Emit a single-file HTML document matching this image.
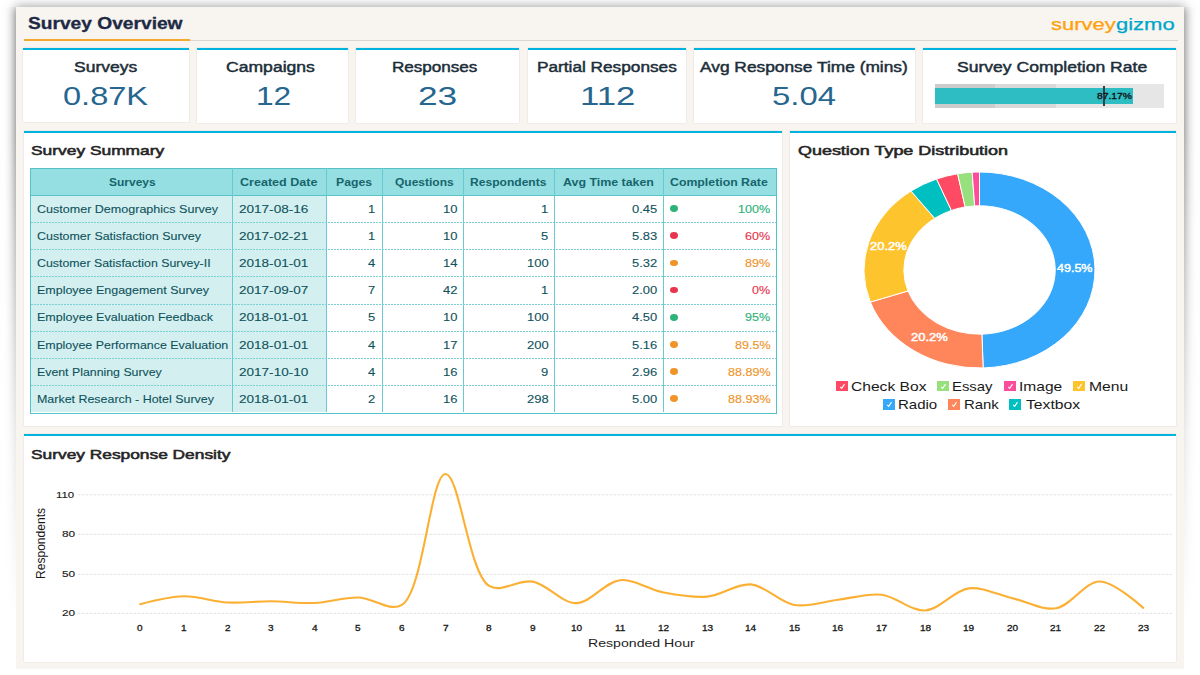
<!DOCTYPE html>
<html><head><meta charset="utf-8">
<style>
html,body{margin:0;padding:0;width:1200px;height:675px;overflow:hidden;background:#fff;}
body{position:relative;font-family:"Liberation Sans", sans-serif;}
.a{position:absolute;}
.t{position:absolute;white-space:nowrap;line-height:1;transform-origin:0 0;font-family:"Liberation Sans", sans-serif;}
#frame{left:16px;top:7px;width:1168px;height:662px;background:#f8f4f0;}
.card{position:absolute;background:#fff;border-top:2px solid #00b3de;box-shadow:0 0 1px rgba(120,100,90,.35);}
.sq{position:absolute;width:11px;height:11px;}
.sq svg{position:absolute;left:0;top:0;}
</style></head>
<body>
<!-- shadows -->
<div class="a" style="left:16px;top:7px;width:1168px;height:662px;box-shadow:0 0 10px 1px rgba(0,0,0,.55);"></div>
<div class="a" style="left:0;top:0;width:16px;height:675px;background:linear-gradient(to bottom,rgba(255,255,255,0) 0%,rgba(255,255,255,0) 20%,rgba(255,255,255,.75) 65%,#fff 92%);"></div>
<div class="a" style="left:1184px;top:0;width:16px;height:675px;background:linear-gradient(to bottom,rgba(255,255,255,0) 0%,rgba(255,255,255,0) 20%,rgba(255,255,255,.75) 65%,#fff 92%);"></div>
<div class="a" style="left:0;top:0;width:1200px;height:7px;background:rgba(255,255,255,.35);"></div>
<div class="a" style="left:0;top:669px;width:1200px;height:6px;background:#fff;"></div>
<div id="frame" class="a"></div>
<!-- header lines -->
<div class="a" style="left:24px;top:39px;width:166px;height:2px;background:#f3a92f;"></div>
<div class="a" style="left:190px;top:40px;width:988px;height:1px;background:#d9d6d3;"></div>
<!-- logo -->


<!-- KPI cards -->
<div class="card" style="left:23px;top:48px;width:166px;height:72px;"></div>
<div class="card" style="left:197px;top:48px;width:151px;height:73px;"></div>
<div class="card" style="left:356px;top:48px;width:162.5px;height:73px;"></div>
<div class="card" style="left:528px;top:48px;width:158px;height:73px;"></div>
<div class="card" style="left:693.5px;top:48px;width:221px;height:73px;"></div>
<div class="card" style="left:923px;top:48px;width:253px;height:73px;"></div>

<!-- bullet -->
<div class="a" style="left:935px;top:84px;width:229px;height:24px;background:#e6e6e6;"></div>
<div class="a" style="left:935px;top:84px;width:120.5px;height:24px;background:#d9d9d9;"></div>
<div class="a" style="left:935px;top:84px;width:60px;height:24px;background:#cccccc;"></div>
<div class="a" style="left:935px;top:88px;width:198px;height:16px;background:#2dbdc3;"></div>
<div class="a" style="left:1103px;top:86px;width:2px;height:20px;background:#34414b;"></div>

<!-- panels -->
<div class="card" style="left:24px;top:131px;width:758px;height:293px;"></div>
<div class="card" style="left:789.5px;top:131px;width:386.5px;height:293px;"></div>
<div class="card" style="left:24px;top:433.5px;width:1152px;height:226px;"></div>

<!-- table -->
<div class="a" style="left:30px;top:167.5px;width:744.7px;height:244px;border:1px solid #55c2c8;background:#fff;"></div>
<div class="a" style="left:31px;top:168.5px;width:744.7px;height:27px;background:#95dee1;"></div>
<div class="a" style="left:31px;top:195.5px;width:295px;height:216px;background:#d3efef;"></div>
<div class="a" style="left:31px;top:195px;width:744.7px;height:1px;background:#55c3c8;"></div>
<div class="a" style="left:232px;top:168px;width:1px;height:244px;background:#68cacf;"></div>
<div class="a" style="left:325.5px;top:168px;width:1px;height:244px;background:#68cacf;"></div>
<div class="a" style="left:382px;top:168px;width:1px;height:244px;background:#68cacf;"></div>
<div class="a" style="left:462.8px;top:168px;width:1px;height:244px;background:#68cacf;"></div>
<div class="a" style="left:553.7px;top:168px;width:1px;height:244px;background:#68cacf;"></div>
<div class="a" style="left:663px;top:168px;width:1px;height:244px;background:#68cacf;"></div>
<div class='a' style='left:31px;top:222.15px;width:744.7px;height:1px;background:repeating-linear-gradient(to right,#7ad1d5 0 2px,rgba(255,255,255,0) 2px 3px);'></div>
<div class='a' style='left:31px;top:249.30px;width:744.7px;height:1px;background:repeating-linear-gradient(to right,#7ad1d5 0 2px,rgba(255,255,255,0) 2px 3px);'></div>
<div class='a' style='left:31px;top:276.45px;width:744.7px;height:1px;background:repeating-linear-gradient(to right,#7ad1d5 0 2px,rgba(255,255,255,0) 2px 3px);'></div>
<div class='a' style='left:31px;top:303.60px;width:744.7px;height:1px;background:repeating-linear-gradient(to right,#7ad1d5 0 2px,rgba(255,255,255,0) 2px 3px);'></div>
<div class='a' style='left:31px;top:330.75px;width:744.7px;height:1px;background:repeating-linear-gradient(to right,#7ad1d5 0 2px,rgba(255,255,255,0) 2px 3px);'></div>
<div class='a' style='left:31px;top:357.90px;width:744.7px;height:1px;background:repeating-linear-gradient(to right,#7ad1d5 0 2px,rgba(255,255,255,0) 2px 3px);'></div>
<div class='a' style='left:31px;top:385.05px;width:744.7px;height:1px;background:repeating-linear-gradient(to right,#7ad1d5 0 2px,rgba(255,255,255,0) 2px 3px);'></div>
<div class='a' style='left:669.8px;top:205.20px;width:8px;height:6.8px;border-radius:50%;background:#2db377;'></div>
<div class='a' style='left:669.8px;top:232.35px;width:8px;height:6.8px;border-radius:50%;background:#e8354f;'></div>
<div class='a' style='left:669.8px;top:259.50px;width:8px;height:6.8px;border-radius:50%;background:#ef9429;'></div>
<div class='a' style='left:669.8px;top:286.65px;width:8px;height:6.8px;border-radius:50%;background:#e8354f;'></div>
<div class='a' style='left:669.8px;top:313.80px;width:8px;height:6.8px;border-radius:50%;background:#2db377;'></div>
<div class='a' style='left:669.8px;top:340.95px;width:8px;height:6.8px;border-radius:50%;background:#ef9429;'></div>
<div class='a' style='left:669.8px;top:368.10px;width:8px;height:6.8px;border-radius:50%;background:#ef9429;'></div>
<div class='a' style='left:669.8px;top:395.25px;width:8px;height:6.8px;border-radius:50%;background:#ef9429;'></div>

<!-- donut -->
<svg class="a" style="left:0;top:0" width="1200" height="675">
<path d='M979.50,172.00 A115.50,98.00 0 0 1 983.16,367.95 L981.90,334.16 A75.65,64.19 0 0 0 979.50,205.81 Z' fill='#36a8fc' stroke='#fff' stroke-width='1'/>
<path d='M983.16,367.95 A115.50,98.00 0 0 1 870.35,302.05 L908.01,290.99 A75.65,64.19 0 0 0 981.90,334.16 Z' fill='#ff865a' stroke='#fff' stroke-width='1'/>
<path d='M870.35,302.05 A115.50,98.00 0 0 1 911.02,191.08 L934.65,218.31 A75.65,64.19 0 0 0 908.01,290.99 Z' fill='#fec42e' stroke='#fff' stroke-width='1'/>
<path d='M911.02,191.08 A115.50,98.00 0 0 1 936.57,179.02 L951.38,210.41 A75.65,64.19 0 0 0 934.65,218.31 Z' fill='#00bfc1' stroke='#fff' stroke-width='1'/>
<path d='M936.57,179.02 A115.50,98.00 0 0 1 957.64,173.77 L965.18,206.97 A75.65,64.19 0 0 0 951.38,210.41 Z' fill='#ff4a63' stroke='#fff' stroke-width='1'/>
<path d='M957.64,173.77 A115.50,98.00 0 0 1 972.17,172.20 L974.70,205.94 A75.65,64.19 0 0 0 965.18,206.97 Z' fill='#97e07d' stroke='#fff' stroke-width='1'/>
<path d='M972.17,172.20 A115.50,98.00 0 0 1 979.50,172.00 L979.50,205.81 A75.65,64.19 0 0 0 974.70,205.94 Z' fill='#ff4b9b' stroke='#fff' stroke-width='1'/>
</svg>
<div class='sq' style='left:835.9px;top:380.9px;width:12px;height:10.6px;background:#ff4a63'><svg width='12' height='11'><path d='M4.2,5.9 L5.7,7.4 L8.5,3.1' fill='none' stroke='#fff' stroke-width='1.1'/></svg></div>
<div class='sq' style='left:937.1px;top:380.9px;width:12px;height:10.6px;background:#97e07d'><svg width='12' height='11'><path d='M4.2,5.9 L5.7,7.4 L8.5,3.1' fill='none' stroke='#fff' stroke-width='1.1'/></svg></div>
<div class='sq' style='left:1004.4px;top:380.9px;width:12px;height:10.6px;background:#ff4b9b'><svg width='12' height='11'><path d='M4.2,5.9 L5.7,7.4 L8.5,3.1' fill='none' stroke='#fff' stroke-width='1.1'/></svg></div>
<div class='sq' style='left:1073.4px;top:380.9px;width:12px;height:10.6px;background:#fec42e'><svg width='12' height='11'><path d='M4.2,5.9 L5.7,7.4 L8.5,3.1' fill='none' stroke='#fff' stroke-width='1.1'/></svg></div>
<div class='sq' style='left:882.8px;top:399.3px;width:12px;height:10.6px;background:#36a8fc'><svg width='12' height='11'><path d='M4.2,5.9 L5.7,7.4 L8.5,3.1' fill='none' stroke='#fff' stroke-width='1.1'/></svg></div>
<div class='sq' style='left:948.3px;top:399.3px;width:12px;height:10.6px;background:#ff865a'><svg width='12' height='11'><path d='M4.2,5.9 L5.7,7.4 L8.5,3.1' fill='none' stroke='#fff' stroke-width='1.1'/></svg></div>
<div class='sq' style='left:1009.1px;top:399.3px;width:12px;height:10.6px;background:#00bfc1'><svg width='12' height='11'><path d='M4.2,5.9 L5.7,7.4 L8.5,3.1' fill='none' stroke='#fff' stroke-width='1.1'/></svg></div>

<!-- line chart -->
<svg class="a" style="left:0;top:0" width="1200" height="675">
<g stroke="#e0e0e0" stroke-width="1" stroke-dasharray="2.5,1.5">
<line x1="78" y1="494.8" x2="1172" y2="494.8"/>
<line x1="78" y1="534.3" x2="1172" y2="534.3"/>
<line x1="78" y1="574.4" x2="1172" y2="574.4"/>
<line x1="78" y1="613.4" x2="1172" y2="613.4"/>
</g>
<path d="M140.20,604.18 C140.20,604.18 169.25,596.55 183.81,596.27 C198.32,595.99 212.85,601.63 227.42,602.46 C241.92,603.29 256.49,601.19 271.03,601.28 C285.57,601.36 300.13,603.62 314.64,602.99 C329.20,602.36 343.74,597.13 358.25,597.45 C372.81,597.78 389.60,612.30 401.86,604.97 C423.51,592.01 430.39,474.36 445.47,473.98 C459.53,473.62 468.60,573.26 489.08,585.86 C501.45,593.46 518.51,579.05 532.69,581.64 C547.62,584.37 561.81,603.31 576.30,603.12 C590.89,602.93 605.05,581.76 619.91,580.19 C634.15,578.69 648.86,589.70 663.52,592.45 C677.94,595.15 692.71,597.95 707.13,596.66 C721.79,595.36 736.42,583.21 750.74,584.41 C765.51,585.64 779.46,602.54 794.35,604.97 C808.56,607.28 823.42,601.54 837.96,599.83 C852.50,598.11 867.23,593.03 881.57,594.69 C896.31,596.39 910.83,611.38 925.18,610.50 C939.91,609.60 953.91,590.21 968.79,588.36 C983.02,586.60 997.87,594.93 1012.40,598.25 C1026.94,601.56 1041.93,610.57 1056.01,608.26 C1071.07,605.80 1085.07,581.56 1099.62,581.51 C1114.14,581.46 1143.23,607.87 1143.23,607.87" fill="none" stroke="#fbb034" stroke-width="2.1" stroke-linejoin="round" stroke-linecap="round"/>
</svg>
<div class="t" style="left:34.6px;top:579px;font-size:12.5px;color:#1a1a1a;transform-origin:0 0;transform:rotate(-90deg) scaleX(0.965);">Respondents</div>

<div class='t' style='left:28.34px;top:15.96px;font-size:16px;font-weight:700;color:#1d2a44;transform:scaleX(1.1982);-webkit-text-stroke:0.3px currentColor;'>Survey Overview</div>
<div class='t' style='left:1051.40px;top:15.83px;font-size:16.5px;font-weight:400;color:#000;transform:scaleX(1.3351);'><span style="color:#ffa10a;-webkit-text-stroke:0.25px #ffa10a">survey</span><span style="color:#00a6c9;-webkit-text-stroke:0.25px #00a6c9">gizmo</span></div>
<div class='t' style='left:74.33px;top:60.25px;font-size:14px;font-weight:400;color:#1c2e39;transform:scaleX(1.2495);-webkit-text-stroke:0.45px currentColor;'>Surveys</div>
<div class='t' style='left:226.42px;top:60.25px;font-size:14px;font-weight:400;color:#1c2e39;transform:scaleX(1.2552);-webkit-text-stroke:0.45px currentColor;'>Campaigns</div>
<div class='t' style='left:392.45px;top:60.25px;font-size:14px;font-weight:400;color:#1c2e39;transform:scaleX(1.2187);-webkit-text-stroke:0.45px currentColor;'>Responses</div>
<div class='t' style='left:537.44px;top:60.25px;font-size:14px;font-weight:400;color:#1c2e39;transform:scaleX(1.2302);-webkit-text-stroke:0.45px currentColor;'>Partial Responses</div>
<div class='t' style='left:700.13px;top:60.25px;font-size:14px;font-weight:400;color:#1c2e39;transform:scaleX(1.2382);-webkit-text-stroke:0.45px currentColor;'>Avg Response Time (mins)</div>
<div class='t' style='left:957.37px;top:60.25px;font-size:14px;font-weight:400;color:#1c2e39;transform:scaleX(1.2531);-webkit-text-stroke:0.45px currentColor;'>Survey Completion Rate</div>
<div class='t' style='left:63.37px;top:84.04px;font-size:25px;font-weight:400;color:#27668f;transform:scaleX(1.3024);'>0.87K</div>
<div class='t' style='left:255.72px;top:84.04px;font-size:25px;font-weight:400;color:#27668f;transform:scaleX(1.2668);'>12</div>
<div class='t' style='left:417.54px;top:84.04px;font-size:25px;font-weight:400;color:#27668f;transform:scaleX(1.4102);'>23</div>
<div class='t' style='left:579.96px;top:84.04px;font-size:25px;font-weight:400;color:#27668f;transform:scaleX(1.3894);'>112</div>
<div class='t' style='left:771.96px;top:84.04px;font-size:25px;font-weight:400;color:#27668f;transform:scaleX(1.3156);'>5.04</div>
<div class='t' style='left:31.03px;top:143.90px;font-size:13px;font-weight:400;color:#252525;transform:scaleX(1.3364);-webkit-text-stroke:0.55px currentColor;'>Survey Summary</div>
<div class='t' style='left:797.70px;top:144.30px;font-size:13px;font-weight:400;color:#252525;transform:scaleX(1.3797);-webkit-text-stroke:0.55px currentColor;'>Question Type Distribution</div>
<div class='t' style='left:31.43px;top:448.40px;font-size:13px;font-weight:400;color:#252525;transform:scaleX(1.3330);-webkit-text-stroke:0.55px currentColor;'>Survey Response Density</div>
<div class='t' style='left:108.70px;top:176.91px;font-size:10.5px;font-weight:700;color:#17656d;transform:scaleX(1.1415);'>Surveys</div>
<div class='t' style='left:239.67px;top:176.91px;font-size:10.5px;font-weight:700;color:#17656d;transform:scaleX(1.1948);'>Created Date</div>
<div class='t' style='left:336.39px;top:176.91px;font-size:10.5px;font-weight:700;color:#17656d;transform:scaleX(1.1629);'>Pages</div>
<div class='t' style='left:394.80px;top:176.91px;font-size:10.5px;font-weight:700;color:#17656d;transform:scaleX(1.1425);'>Questions</div>
<div class='t' style='left:469.90px;top:176.91px;font-size:10.5px;font-weight:700;color:#17656d;transform:scaleX(1.1496);'>Respondents</div>
<div class='t' style='left:563.18px;top:176.91px;font-size:10.5px;font-weight:700;color:#17656d;transform:scaleX(1.1799);'>Avg Time taken</div>
<div class='t' style='left:670.38px;top:176.91px;font-size:10.5px;font-weight:700;color:#17656d;transform:scaleX(1.1722);'>Completion Rate</div>
<div class='t' style='left:37.27px;top:203.89px;font-size:11px;font-weight:400;color:#0f525c;transform:scaleX(1.1393);-webkit-text-stroke:0.1px currentColor;'>Customer Demographics Survey</div>
<div class='t' style='left:238.52px;top:203.89px;font-size:11px;font-weight:400;color:#0f525c;transform:scaleX(1.2310);-webkit-text-stroke:0.1px currentColor;'>2017-08-16</div>
<div class='t' style='left:368.10px;top:203.89px;font-size:11px;font-weight:400;color:#0f525c;transform:scaleX(1.1800);-webkit-text-stroke:0.1px currentColor;'>1</div>
<div class='t' style='left:443.07px;top:203.89px;font-size:11px;font-weight:400;color:#0f525c;transform:scaleX(1.1800);-webkit-text-stroke:0.1px currentColor;'>10</div>
<div class='t' style='left:541.10px;top:203.89px;font-size:11px;font-weight:400;color:#0f525c;transform:scaleX(1.1800);-webkit-text-stroke:0.1px currentColor;'>1</div>
<div class='t' style='left:632.45px;top:203.89px;font-size:11px;font-weight:400;color:#0f525c;transform:scaleX(1.1800);-webkit-text-stroke:0.1px currentColor;'>0.45</div>
<div class='t' style='left:738.45px;top:203.89px;font-size:11px;font-weight:400;color:#2db377;transform:scaleX(1.1400);-webkit-text-stroke:0.15px currentColor;'>100%</div>
<div class='t' style='left:37.28px;top:231.04px;font-size:11px;font-weight:400;color:#0f525c;transform:scaleX(1.1312);-webkit-text-stroke:0.1px currentColor;'>Customer Satisfaction Survey</div>
<div class='t' style='left:238.52px;top:231.04px;font-size:11px;font-weight:400;color:#0f525c;transform:scaleX(1.2310);-webkit-text-stroke:0.1px currentColor;'>2017-02-21</div>
<div class='t' style='left:368.10px;top:231.04px;font-size:11px;font-weight:400;color:#0f525c;transform:scaleX(1.1800);-webkit-text-stroke:0.1px currentColor;'>1</div>
<div class='t' style='left:443.07px;top:231.04px;font-size:11px;font-weight:400;color:#0f525c;transform:scaleX(1.1800);-webkit-text-stroke:0.1px currentColor;'>10</div>
<div class='t' style='left:541.10px;top:231.04px;font-size:11px;font-weight:400;color:#0f525c;transform:scaleX(1.1800);-webkit-text-stroke:0.1px currentColor;'>5</div>
<div class='t' style='left:632.45px;top:231.04px;font-size:11px;font-weight:400;color:#0f525c;transform:scaleX(1.1800);-webkit-text-stroke:0.1px currentColor;'>5.83</div>
<div class='t' style='left:745.41px;top:231.04px;font-size:11px;font-weight:400;color:#e8354f;transform:scaleX(1.1400);-webkit-text-stroke:0.15px currentColor;'>60%</div>
<div class='t' style='left:37.28px;top:258.19px;font-size:11px;font-weight:400;color:#0f525c;transform:scaleX(1.1223);-webkit-text-stroke:0.1px currentColor;'>Customer Satisfaction Survey-II</div>
<div class='t' style='left:238.52px;top:258.19px;font-size:11px;font-weight:400;color:#0f525c;transform:scaleX(1.2310);-webkit-text-stroke:0.1px currentColor;'>2018-01-01</div>
<div class='t' style='left:368.10px;top:258.19px;font-size:11px;font-weight:400;color:#0f525c;transform:scaleX(1.1800);-webkit-text-stroke:0.1px currentColor;'>4</div>
<div class='t' style='left:443.07px;top:258.19px;font-size:11px;font-weight:400;color:#0f525c;transform:scaleX(1.1800);-webkit-text-stroke:0.1px currentColor;'>14</div>
<div class='t' style='left:526.67px;top:258.19px;font-size:11px;font-weight:400;color:#0f525c;transform:scaleX(1.1800);-webkit-text-stroke:0.1px currentColor;'>100</div>
<div class='t' style='left:632.45px;top:258.19px;font-size:11px;font-weight:400;color:#0f525c;transform:scaleX(1.1800);-webkit-text-stroke:0.1px currentColor;'>5.32</div>
<div class='t' style='left:745.41px;top:258.19px;font-size:11px;font-weight:400;color:#ef9429;transform:scaleX(1.1400);-webkit-text-stroke:0.15px currentColor;'>89%</div>
<div class='t' style='left:37.28px;top:285.34px;font-size:11px;font-weight:400;color:#0f525c;transform:scaleX(1.1341);-webkit-text-stroke:0.1px currentColor;'>Employee Engagement Survey</div>
<div class='t' style='left:238.52px;top:285.34px;font-size:11px;font-weight:400;color:#0f525c;transform:scaleX(1.2310);-webkit-text-stroke:0.1px currentColor;'>2017-09-07</div>
<div class='t' style='left:368.10px;top:285.34px;font-size:11px;font-weight:400;color:#0f525c;transform:scaleX(1.1800);-webkit-text-stroke:0.1px currentColor;'>7</div>
<div class='t' style='left:443.07px;top:285.34px;font-size:11px;font-weight:400;color:#0f525c;transform:scaleX(1.1800);-webkit-text-stroke:0.1px currentColor;'>42</div>
<div class='t' style='left:541.10px;top:285.34px;font-size:11px;font-weight:400;color:#0f525c;transform:scaleX(1.1800);-webkit-text-stroke:0.1px currentColor;'>1</div>
<div class='t' style='left:632.45px;top:285.34px;font-size:11px;font-weight:400;color:#0f525c;transform:scaleX(1.1800);-webkit-text-stroke:0.1px currentColor;'>2.00</div>
<div class='t' style='left:752.40px;top:285.34px;font-size:11px;font-weight:400;color:#e8354f;transform:scaleX(1.1400);-webkit-text-stroke:0.15px currentColor;'>0%</div>
<div class='t' style='left:37.27px;top:312.49px;font-size:11px;font-weight:400;color:#0f525c;transform:scaleX(1.1369);-webkit-text-stroke:0.1px currentColor;'>Employee Evaluation Feedback</div>
<div class='t' style='left:238.52px;top:312.49px;font-size:11px;font-weight:400;color:#0f525c;transform:scaleX(1.2310);-webkit-text-stroke:0.1px currentColor;'>2018-01-01</div>
<div class='t' style='left:368.10px;top:312.49px;font-size:11px;font-weight:400;color:#0f525c;transform:scaleX(1.1800);-webkit-text-stroke:0.1px currentColor;'>5</div>
<div class='t' style='left:443.07px;top:312.49px;font-size:11px;font-weight:400;color:#0f525c;transform:scaleX(1.1800);-webkit-text-stroke:0.1px currentColor;'>10</div>
<div class='t' style='left:526.67px;top:312.49px;font-size:11px;font-weight:400;color:#0f525c;transform:scaleX(1.1800);-webkit-text-stroke:0.1px currentColor;'>100</div>
<div class='t' style='left:632.45px;top:312.49px;font-size:11px;font-weight:400;color:#0f525c;transform:scaleX(1.1800);-webkit-text-stroke:0.1px currentColor;'>4.50</div>
<div class='t' style='left:745.41px;top:312.49px;font-size:11px;font-weight:400;color:#2db377;transform:scaleX(1.1400);-webkit-text-stroke:0.15px currentColor;'>95%</div>
<div class='t' style='left:37.28px;top:339.64px;font-size:11px;font-weight:400;color:#0f525c;transform:scaleX(1.1294);-webkit-text-stroke:0.1px currentColor;'>Employee Performance Evaluation</div>
<div class='t' style='left:238.52px;top:339.64px;font-size:11px;font-weight:400;color:#0f525c;transform:scaleX(1.2310);-webkit-text-stroke:0.1px currentColor;'>2018-01-01</div>
<div class='t' style='left:368.10px;top:339.64px;font-size:11px;font-weight:400;color:#0f525c;transform:scaleX(1.1800);-webkit-text-stroke:0.1px currentColor;'>4</div>
<div class='t' style='left:443.07px;top:339.64px;font-size:11px;font-weight:400;color:#0f525c;transform:scaleX(1.1800);-webkit-text-stroke:0.1px currentColor;'>17</div>
<div class='t' style='left:526.67px;top:339.64px;font-size:11px;font-weight:400;color:#0f525c;transform:scaleX(1.1800);-webkit-text-stroke:0.1px currentColor;'>200</div>
<div class='t' style='left:632.45px;top:339.64px;font-size:11px;font-weight:400;color:#0f525c;transform:scaleX(1.1800);-webkit-text-stroke:0.1px currentColor;'>5.16</div>
<div class='t' style='left:734.96px;top:339.64px;font-size:11px;font-weight:400;color:#ef9429;transform:scaleX(1.1400);-webkit-text-stroke:0.15px currentColor;'>89.5%</div>
<div class='t' style='left:37.28px;top:366.79px;font-size:11px;font-weight:400;color:#0f525c;transform:scaleX(1.1212);-webkit-text-stroke:0.1px currentColor;'>Event Planning Survey</div>
<div class='t' style='left:238.52px;top:366.79px;font-size:11px;font-weight:400;color:#0f525c;transform:scaleX(1.2310);-webkit-text-stroke:0.1px currentColor;'>2017-10-10</div>
<div class='t' style='left:368.10px;top:366.79px;font-size:11px;font-weight:400;color:#0f525c;transform:scaleX(1.1800);-webkit-text-stroke:0.1px currentColor;'>4</div>
<div class='t' style='left:443.07px;top:366.79px;font-size:11px;font-weight:400;color:#0f525c;transform:scaleX(1.1800);-webkit-text-stroke:0.1px currentColor;'>16</div>
<div class='t' style='left:541.10px;top:366.79px;font-size:11px;font-weight:400;color:#0f525c;transform:scaleX(1.1800);-webkit-text-stroke:0.1px currentColor;'>9</div>
<div class='t' style='left:632.45px;top:366.79px;font-size:11px;font-weight:400;color:#0f525c;transform:scaleX(1.1800);-webkit-text-stroke:0.1px currentColor;'>2.96</div>
<div class='t' style='left:727.99px;top:366.79px;font-size:11px;font-weight:400;color:#ef9429;transform:scaleX(1.1400);-webkit-text-stroke:0.15px currentColor;'>88.89%</div>
<div class='t' style='left:37.28px;top:393.94px;font-size:11px;font-weight:400;color:#0f525c;transform:scaleX(1.1303);-webkit-text-stroke:0.1px currentColor;'>Market Research - Hotel Survey</div>
<div class='t' style='left:238.52px;top:393.94px;font-size:11px;font-weight:400;color:#0f525c;transform:scaleX(1.2310);-webkit-text-stroke:0.1px currentColor;'>2018-01-01</div>
<div class='t' style='left:368.10px;top:393.94px;font-size:11px;font-weight:400;color:#0f525c;transform:scaleX(1.1800);-webkit-text-stroke:0.1px currentColor;'>2</div>
<div class='t' style='left:443.07px;top:393.94px;font-size:11px;font-weight:400;color:#0f525c;transform:scaleX(1.1800);-webkit-text-stroke:0.1px currentColor;'>16</div>
<div class='t' style='left:526.67px;top:393.94px;font-size:11px;font-weight:400;color:#0f525c;transform:scaleX(1.1800);-webkit-text-stroke:0.1px currentColor;'>298</div>
<div class='t' style='left:632.45px;top:393.94px;font-size:11px;font-weight:400;color:#0f525c;transform:scaleX(1.1800);-webkit-text-stroke:0.1px currentColor;'>5.00</div>
<div class='t' style='left:727.99px;top:393.94px;font-size:11px;font-weight:400;color:#ef9429;transform:scaleX(1.1400);-webkit-text-stroke:0.15px currentColor;'>88.93%</div>
<div class='t' style='left:850.62px;top:380.00px;font-size:13px;font-weight:400;color:#1a1a1a;transform:scaleX(1.2000);'>Check Box</div>
<div class='t' style='left:951.96px;top:380.00px;font-size:13px;font-weight:400;color:#1a1a1a;transform:scaleX(1.1436);'>Essay</div>
<div class='t' style='left:1019.22px;top:380.00px;font-size:13px;font-weight:400;color:#1a1a1a;transform:scaleX(1.1966);'>Image</div>
<div class='t' style='left:1088.82px;top:380.00px;font-size:13px;font-weight:400;color:#1a1a1a;transform:scaleX(1.2067);'>Menu</div>
<div class='t' style='left:898.25px;top:398.00px;font-size:13px;font-weight:400;color:#1a1a1a;transform:scaleX(1.1540);'>Radio</div>
<div class='t' style='left:964.16px;top:398.00px;font-size:13px;font-weight:400;color:#1a1a1a;transform:scaleX(1.1460);'>Rank</div>
<div class='t' style='left:1026.11px;top:398.00px;font-size:13px;font-weight:400;color:#1a1a1a;transform:scaleX(1.2085);'>Textbox</div>
<div class='t' style='left:1057.17px;top:263.29px;font-size:11px;font-weight:400;color:#ffffff;transform:scaleX(1.1377);-webkit-text-stroke:0.45px #fff;'>49.5%</div>
<div class='t' style='left:870.15px;top:241.29px;font-size:11px;font-weight:400;color:#ffffff;transform:scaleX(1.1806);-webkit-text-stroke:0.45px #fff;'>20.2%</div>
<div class='t' style='left:911.15px;top:332.29px;font-size:11px;font-weight:400;color:#ffffff;transform:scaleX(1.1806);-webkit-text-stroke:0.45px #fff;'>20.2%</div>
<div class='t' style='left:1096.68px;top:92.00px;font-size:8.5px;font-weight:400;color:#111111;transform:scaleX(1.2143);-webkit-text-stroke:0.3px currentColor;'>87.17%</div>
<div class='t' style='left:56.44px;top:491.00px;font-size:8.5px;font-weight:400;color:#1a1a1a;transform:scaleX(1.3429);-webkit-text-stroke:0.12px currentColor;'>110</div>
<div class='t' style='left:61.51px;top:530.20px;font-size:8.5px;font-weight:400;color:#1a1a1a;transform:scaleX(1.3881);-webkit-text-stroke:0.12px currentColor;'>80</div>
<div class='t' style='left:61.51px;top:570.30px;font-size:8.5px;font-weight:400;color:#1a1a1a;transform:scaleX(1.3881);-webkit-text-stroke:0.12px currentColor;'>50</div>
<div class='t' style='left:61.51px;top:609.20px;font-size:8.5px;font-weight:400;color:#1a1a1a;transform:scaleX(1.3881);-webkit-text-stroke:0.12px currentColor;'>20</div>
<div class='t' style='left:137.41px;top:623.70px;font-size:8.5px;font-weight:400;color:#1a1a1a;transform:scaleX(1.1800);-webkit-text-stroke:0.3px currentColor;'>0</div>
<div class='t' style='left:181.02px;top:623.70px;font-size:8.5px;font-weight:400;color:#1a1a1a;transform:scaleX(1.1800);-webkit-text-stroke:0.3px currentColor;'>1</div>
<div class='t' style='left:224.63px;top:623.70px;font-size:8.5px;font-weight:400;color:#1a1a1a;transform:scaleX(1.1800);-webkit-text-stroke:0.3px currentColor;'>2</div>
<div class='t' style='left:268.24px;top:623.70px;font-size:8.5px;font-weight:400;color:#1a1a1a;transform:scaleX(1.1800);-webkit-text-stroke:0.3px currentColor;'>3</div>
<div class='t' style='left:311.85px;top:623.70px;font-size:8.5px;font-weight:400;color:#1a1a1a;transform:scaleX(1.1800);-webkit-text-stroke:0.3px currentColor;'>4</div>
<div class='t' style='left:355.46px;top:623.70px;font-size:8.5px;font-weight:400;color:#1a1a1a;transform:scaleX(1.1800);-webkit-text-stroke:0.3px currentColor;'>5</div>
<div class='t' style='left:399.07px;top:623.70px;font-size:8.5px;font-weight:400;color:#1a1a1a;transform:scaleX(1.1800);-webkit-text-stroke:0.3px currentColor;'>6</div>
<div class='t' style='left:442.68px;top:623.70px;font-size:8.5px;font-weight:400;color:#1a1a1a;transform:scaleX(1.1800);-webkit-text-stroke:0.3px currentColor;'>7</div>
<div class='t' style='left:486.29px;top:623.70px;font-size:8.5px;font-weight:400;color:#1a1a1a;transform:scaleX(1.1800);-webkit-text-stroke:0.3px currentColor;'>8</div>
<div class='t' style='left:529.90px;top:623.70px;font-size:8.5px;font-weight:400;color:#1a1a1a;transform:scaleX(1.1800);-webkit-text-stroke:0.3px currentColor;'>9</div>
<div class='t' style='left:570.71px;top:623.70px;font-size:8.5px;font-weight:400;color:#1a1a1a;transform:scaleX(1.1800);-webkit-text-stroke:0.3px currentColor;'>10</div>
<div class='t' style='left:614.70px;top:623.70px;font-size:8.5px;font-weight:400;color:#1a1a1a;transform:scaleX(1.1800);-webkit-text-stroke:0.3px currentColor;'>11</div>
<div class='t' style='left:657.93px;top:623.70px;font-size:8.5px;font-weight:400;color:#1a1a1a;transform:scaleX(1.1800);-webkit-text-stroke:0.3px currentColor;'>12</div>
<div class='t' style='left:701.54px;top:623.70px;font-size:8.5px;font-weight:400;color:#1a1a1a;transform:scaleX(1.1800);-webkit-text-stroke:0.3px currentColor;'>13</div>
<div class='t' style='left:745.15px;top:623.70px;font-size:8.5px;font-weight:400;color:#1a1a1a;transform:scaleX(1.1800);-webkit-text-stroke:0.3px currentColor;'>14</div>
<div class='t' style='left:788.76px;top:623.70px;font-size:8.5px;font-weight:400;color:#1a1a1a;transform:scaleX(1.1800);-webkit-text-stroke:0.3px currentColor;'>15</div>
<div class='t' style='left:832.37px;top:623.70px;font-size:8.5px;font-weight:400;color:#1a1a1a;transform:scaleX(1.1800);-webkit-text-stroke:0.3px currentColor;'>16</div>
<div class='t' style='left:875.98px;top:623.70px;font-size:8.5px;font-weight:400;color:#1a1a1a;transform:scaleX(1.1800);-webkit-text-stroke:0.3px currentColor;'>17</div>
<div class='t' style='left:919.59px;top:623.70px;font-size:8.5px;font-weight:400;color:#1a1a1a;transform:scaleX(1.1800);-webkit-text-stroke:0.3px currentColor;'>18</div>
<div class='t' style='left:963.20px;top:623.70px;font-size:8.5px;font-weight:400;color:#1a1a1a;transform:scaleX(1.1800);-webkit-text-stroke:0.3px currentColor;'>19</div>
<div class='t' style='left:1006.81px;top:623.70px;font-size:8.5px;font-weight:400;color:#1a1a1a;transform:scaleX(1.1800);-webkit-text-stroke:0.3px currentColor;'>20</div>
<div class='t' style='left:1050.42px;top:623.70px;font-size:8.5px;font-weight:400;color:#1a1a1a;transform:scaleX(1.1800);-webkit-text-stroke:0.3px currentColor;'>21</div>
<div class='t' style='left:1094.03px;top:623.70px;font-size:8.5px;font-weight:400;color:#1a1a1a;transform:scaleX(1.1800);-webkit-text-stroke:0.3px currentColor;'>22</div>
<div class='t' style='left:1137.64px;top:623.70px;font-size:8.5px;font-weight:400;color:#1a1a1a;transform:scaleX(1.1800);-webkit-text-stroke:0.3px currentColor;'>23</div>
<div class='t' style='left:587.69px;top:637.87px;font-size:11.5px;font-weight:400;color:#222222;transform:scaleX(1.2274);'>Responded Hour</div>
</body></html>
